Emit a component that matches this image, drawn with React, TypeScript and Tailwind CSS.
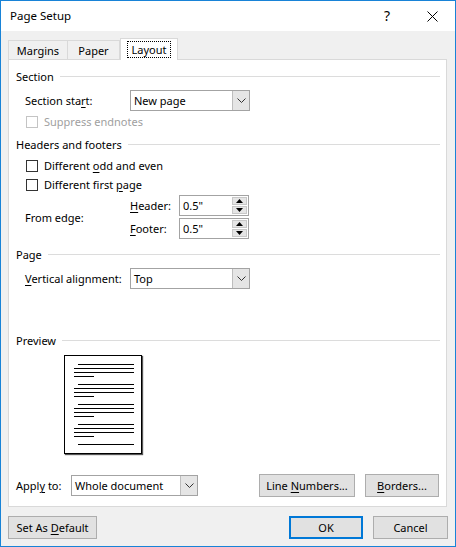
import React from 'react';

const font = { fontFamily: '"Segoe UI", "Noto Sans", "Liberation Sans", sans-serif' };

function U({ children }: { children: React.ReactNode }) {
  return <span className="underline underline-offset-2 decoration-1">{children}</span>;
}

function SectionTitle({ title }: { title: string }) {
  return (
    <div className="flex items-center h-[15px] gap-[6px] pr-[6px]">
      <span className="text-black">{title}</span>
      <div className="flex-1 h-px bg-[#dcdcdc]" />
    </div>
  );
}

function Chevron() {
  return (
    <svg width="9" height="5" viewBox="0 0 9 5" className="block">
      <path d="M0.5 0.5 L4.5 4.5 L8.5 0.5" fill="none" stroke="#333" strokeWidth="1" />
    </svg>
  );
}

function Combo({ value, width }: { value: string; width: string }) {
  return (
    <div className={`flex h-[21px] border border-[#a3a3a3] bg-white ${width}`}>
      <div className="flex-1 flex items-center pl-[3px] text-black">{value}</div>
      <div className="w-[17px] bg-[#e5e5e5] border-l border-[#bdbdbd] flex items-center justify-center">
        <Chevron />
      </div>
    </div>
  );
}

function Checkbox({ label, disabled = false }: { label: React.ReactNode; disabled?: boolean }) {
  return (
    <div className="flex items-center h-[13px] gap-[6px]">
      <div className={`w-[12px] h-[12px] border bg-white ${disabled ? 'border-[#c4c4c4]' : 'border-[#333]'}`} />
      <span className={disabled ? 'text-[#a0a0a0]' : 'text-black'}>{label}</span>
    </div>
  );
}

function Spin({ value }: { value: string }) {
  return (
    <div className="flex h-[21px] w-[70px] border border-[#a3a3a3] bg-white">
      <div className="flex-1 flex items-center pl-[3px] text-black">{value}</div>
      <div className="w-[16px] flex flex-col gap-px py-px pr-px">
        <div className="flex-1 bg-[#e5e5e5] border border-[#c8c8c8] flex items-center justify-center">
          <svg width="7" height="4" viewBox="0 0 7 4"><path d="M3.5 0 L7 4 L0 4 Z" fill="#000" /></svg>
        </div>
        <div className="flex-1 bg-[#e5e5e5] border border-[#c8c8c8] flex items-center justify-center">
          <svg width="7" height="4" viewBox="0 0 7 4"><path d="M0 0 L7 0 L3.5 4 Z" fill="#000" /></svg>
        </div>
      </div>
    </div>
  );
}

function Button({ children, width, primary = false }: { children: React.ReactNode; width: string; primary?: boolean }) {
  return (
    <div
      className={`h-[23px] flex items-center justify-center bg-[#e1e1e1] text-black ${width} ${
        primary ? 'border-2 border-[#0078d7]' : 'border border-[#adadad]'
      }`}
    >
      <span className="whitespace-nowrap">{children}</span>
    </div>
  );
}

function PreviewPage() {
  const para = (
    <div className="flex flex-col gap-[3px]">
      <div className="h-px bg-black ml-[13px] w-[56px]" />
      <div className="h-px bg-black ml-[9px] w-[60px]" />
      <div className="h-px bg-black ml-[9px] w-[60px]" />
      <div className="h-px bg-black ml-[9px] w-[20px]" />
    </div>
  );
  return (
    <div className="w-[78px] h-[99px] bg-white border border-black shadow-[1px_1px_1px_#555] pt-[8px] flex flex-col gap-[7px]">
      {para}
      {para}
      {para}
      {para}
      <div className="h-px bg-black ml-[13px] w-[56px]" />
    </div>
  );
}

export default function App() {
  return (
    <div className="w-[456px] h-[547px] border border-[#1883d7] flex flex-col text-[11px] leading-none bg-[#f0f0f0]" style={font}>
      {/* title bar */}
      <div className="h-[30px] bg-white flex items-center pl-[9px] shrink-0">
        <span className="text-black text-[11.5px]">Page Setup</span>
        <div className="flex-1" />
        <span className="text-black text-[14px] mr-[37px]">?</span>
        <svg width="11" height="11" viewBox="0 0 11 11" className="mr-[17px]">
          <path d="M0.5 0.5 L10.5 10.5 M10.5 0.5 L0.5 10.5" stroke="#000" strokeWidth="1" />
        </svg>
      </div>

      <div className="flex-1 flex flex-col px-[7px] pt-[7px]">
        {/* tabs */}
        <div className="flex items-end h-[21px] relative z-10">
          <div className="h-[19px] w-[60px] border border-b-0 border-[#d9d9d9] flex items-center justify-center text-black">
            Margins
          </div>
          <div className="h-[19px] w-[52px] border border-b-0 border-l-0 border-[#d9d9d9] flex items-center justify-center text-black">
            Paper
          </div>
          <div className="h-[22px] w-[58px] -mb-px bg-white border border-b-0 border-[#d9d9d9] flex items-center justify-center">
            <span className="border border-dotted border-black px-[4px] py-[2px] text-black">Layout</span>
          </div>
        </div>

        {/* panel */}
        <div className="w-[439px] h-[448px] bg-white border border-[#d9d9d9] pl-[7px] flex flex-col">
          <div className="mt-[9px]">
            <SectionTitle title="Section" />
          </div>
          <div className="mt-[6px] flex items-center pl-[9px]">
            <span className="w-[105px] whitespace-nowrap text-black">
              Section sta<U>r</U>t:
            </span>
            <Combo value="New page" width="w-[120px]" />
          </div>
          <div className="mt-[4px] pl-[10px]">
            <Checkbox label="Suppress endnotes" disabled />
          </div>

          <div className="mt-[9px]">
            <SectionTitle title="Headers and footers" />
          </div>
          <div className="mt-[7px] pl-[10px]">
            <Checkbox
              label={
                <>
                  Different <U>o</U>dd and even
                </>
              }
            />
          </div>
          <div className="mt-[6px] pl-[10px]">
            <Checkbox
              label={
                <>
                  Different first <U>p</U>age
                </>
              }
            />
          </div>
          <div className="mt-[4px] flex items-center pl-[9px]">
            <span className="w-[105px] whitespace-nowrap text-black">From edge:</span>
            <div className="flex flex-col gap-[2px]">
              <div className="flex items-center">
                <span className="w-[49px] text-black">
                  <U>H</U>eader:
                </span>
                <Spin value={'0.5"'} />
              </div>
              <div className="flex items-center">
                <span className="w-[49px] text-black">
                  <U>F</U>ooter:
                </span>
                <Spin value={'0.5"'} />
              </div>
            </div>
          </div>

          <div className="mt-[8px]">
            <SectionTitle title="Page" />
          </div>
          <div className="mt-[6px] flex items-center pl-[9px]">
            <span className="w-[105px] whitespace-nowrap text-black">
              <U>V</U>ertical alignment:
            </span>
            <Combo value="Top" width="w-[120px]" />
          </div>

          <div className="mt-[44px]">
            <SectionTitle title="Preview" />
          </div>
          <div className="mt-[7px] ml-[48px]">
            <PreviewPage />
          </div>

          <div className="mt-[20px] flex items-center">
            <span className="w-[55px] whitespace-nowrap text-black">
              Appl<U>y</U> to:
            </span>
            <Combo value="Whole document" width="w-[127px]" />
            <div className="flex-1" />
            <Button width="w-[96px]">
              Line <U>N</U>umbers...
            </Button>
            <div className="w-[10px]" />
            <Button width="w-[74px]">
              <U>B</U>orders...
            </Button>
            <div className="w-[7px]" />
          </div>
        </div>

        {/* bottom buttons */}
        <div className="mt-[9px] flex items-center">
          <Button width="w-[89px]">
            Set As <U>D</U>efault
          </Button>
          <div className="flex-1" />
          <Button width="w-[74px]" primary>
            OK
          </Button>
          <div className="w-[10px]" />
          <Button width="w-[75px]">Cancel</Button>
        </div>
      </div>
    </div>
  );
}
